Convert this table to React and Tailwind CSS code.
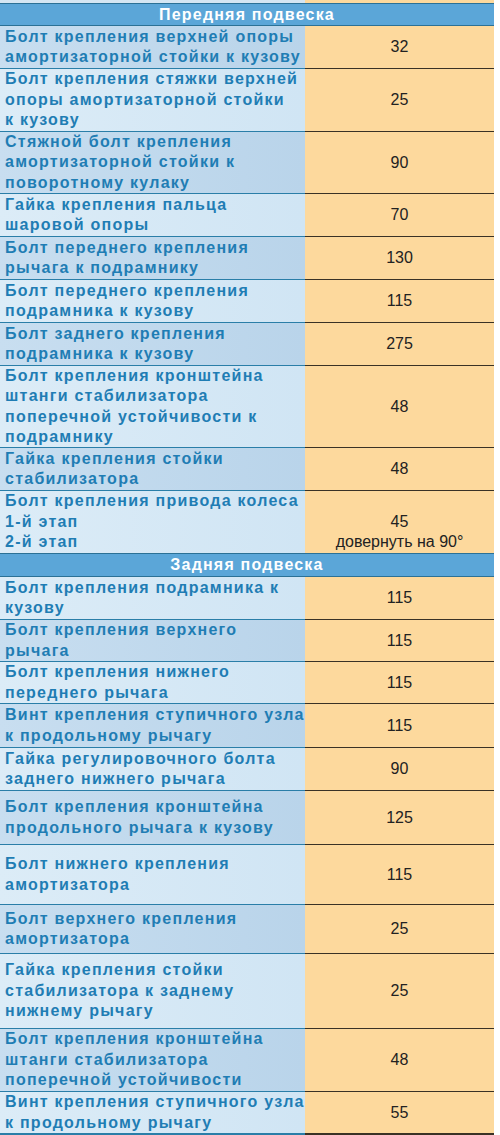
const front = [
  { h: 42, lines: ["Болт крепления верхней опоры", "амортизаторной стойки к кузову"], v: ["32"] },
  { h: 63, lines: ["Болт крепления стяжки верхней", "опоры амортизаторной стойки", "к кузову"], v: ["25"] },
  { h: 62, lines: ["Стяжной болт крепления", "амортизаторной стойки к", "поворотному кулаку"], v: ["90"] },
  { h: 43, lines: ["Гайка крепления пальца", "шаровой опоры"], v: ["70"] },
  { h: 43, lines: ["Болт переднего крепления", "рычага к подрамнику"], v: ["130"] },
  { h: 43, lines: ["Болт переднего крепления", "подрамника к кузову"], v: ["115"] },
  { h: 43, lines: ["Болт заднего крепления", "подрамника к кузову"], v: ["275"] },
  { h: 82, lines: ["Болт крепления кронштейна", "штанги стабилизатора", "поперечной устойчивости к", "подрамнику"], v: ["48"] },
  { h: 43, lines: ["Гайка крепления стойки", "стабилизатора"], v: ["48"] },
  { h: 63, lines: ["Болт крепления привода колеса", "1-й этап", "2-й этап"], v: ["\u00a0", "45", "довернуть на 90°"] },
];

const rear = [
  { h: 42, lines: ["Болт крепления подрамника к", "кузову"], v: ["115"] },
  { h: 42, lines: ["Болт крепления верхнего", "рычага"], v: ["115"] },
  { h: 42, lines: ["Болт крепления нижнего", "переднего рычага"], v: ["115"] },
  { h: 44, lines: ["Винт крепления ступичного узла", "к продольному рычагу"], v: ["115"] },
  { h: 43, lines: ["Гайка регулировочного болта", "заднего нижнего рычага"], v: ["90"] },
  { h: 54, lines: ["Болт крепления кронштейна", "продольного рычага к кузову"], v: ["125"] },
  { h: 60, lines: ["Болт нижнего крепления", "амортизатора"], v: ["115"] },
  { h: 49, lines: ["Болт верхнего крепления", "амортизатора"], v: ["25"] },
  { h: 75, lines: ["Гайка крепления стойки", "стабилизатора к заднему", "нижнему рычагу"], v: ["25"] },
  { h: 63, lines: ["Болт крепления кронштейна", "штанги стабилизатора", "поперечной устойчивости"], v: ["48"] },
  { h: 42, lines: ["Винт крепления ступичного узла", "к продольному рычагу"], v: ["55"] },
];

function Header({ title, h }) {
  return (
    <div
      className="flex items-center justify-center bg-[#5ba6d8] border-t border-b border-[#2b7196] text-white font-bold text-[16px] tracking-[1.2px]"
      style={{ height: h }}
    >
      {title}
    </div>
  );
}

function Row({ row, light, first }) {
  return (
    <div className="flex" style={{ height: row.h }}>
      <div
        className={
          "w-[305px] shrink-0 flex flex-col justify-center pl-[5px] " +
          (first ? "" : "border-t border-[#2a7ea8] ") +
          (light
            ? "bg-gradient-to-r from-[#dcecf7] to-[#d0e5f4]"
            : "bg-gradient-to-r from-[#c8def0] to-[#b9d4ea]")
        }
      >
        {row.lines.map((l, i) => (
          <div
            key={i}
            className="whitespace-nowrap text-[#1f7db4] font-bold text-[16px] leading-[20.5px] tracking-[1.25px]"
          >
            {l}
          </div>
        ))}
      </div>
      <div
        className={
          "flex-1 flex flex-col justify-center items-center bg-[#fdd99d] " +
          (first ? "" : "border-t border-[#3a3225]")
        }
      >
        {row.v.map((t, i) => (
          <div
            key={i}
            className="whitespace-nowrap text-[#222] leading-[20px] text-[16px]"
          >
            {t}
          </div>
        ))}
      </div>
    </div>
  );
}

export default function App() {
  return (
    <div className="w-[500px] h-[1135px] bg-white overflow-hidden" style={{ fontFamily: '"Liberation Sans", Arial, sans-serif' }}>
      <div className="w-[494px]">
        <div className="flex h-[3px]">
          <div className="w-[305px] bg-[#d4e6f3]" />
          <div className="flex-1 bg-[#fdd99d]" />
        </div>
        <Header title="Передняя подвеска" h={23} />
        {front.map((r, i) => (
          <Row key={i} row={r} light={i % 2 === 1} first={i === 0} />
        ))}
        <Header title="Задняя подвеска" h={24} />
        {rear.map((r, i) => (
          <Row key={i} row={r} light={i % 2 === 0} first={i === 0} />
        ))}
        <div className="flex h-[2px]">
          <div className="w-[305px] bg-[#2a7ea8]" />
          <div className="flex-1 bg-[#3a3225]" />
        </div>
      </div>
    </div>
  );
}
